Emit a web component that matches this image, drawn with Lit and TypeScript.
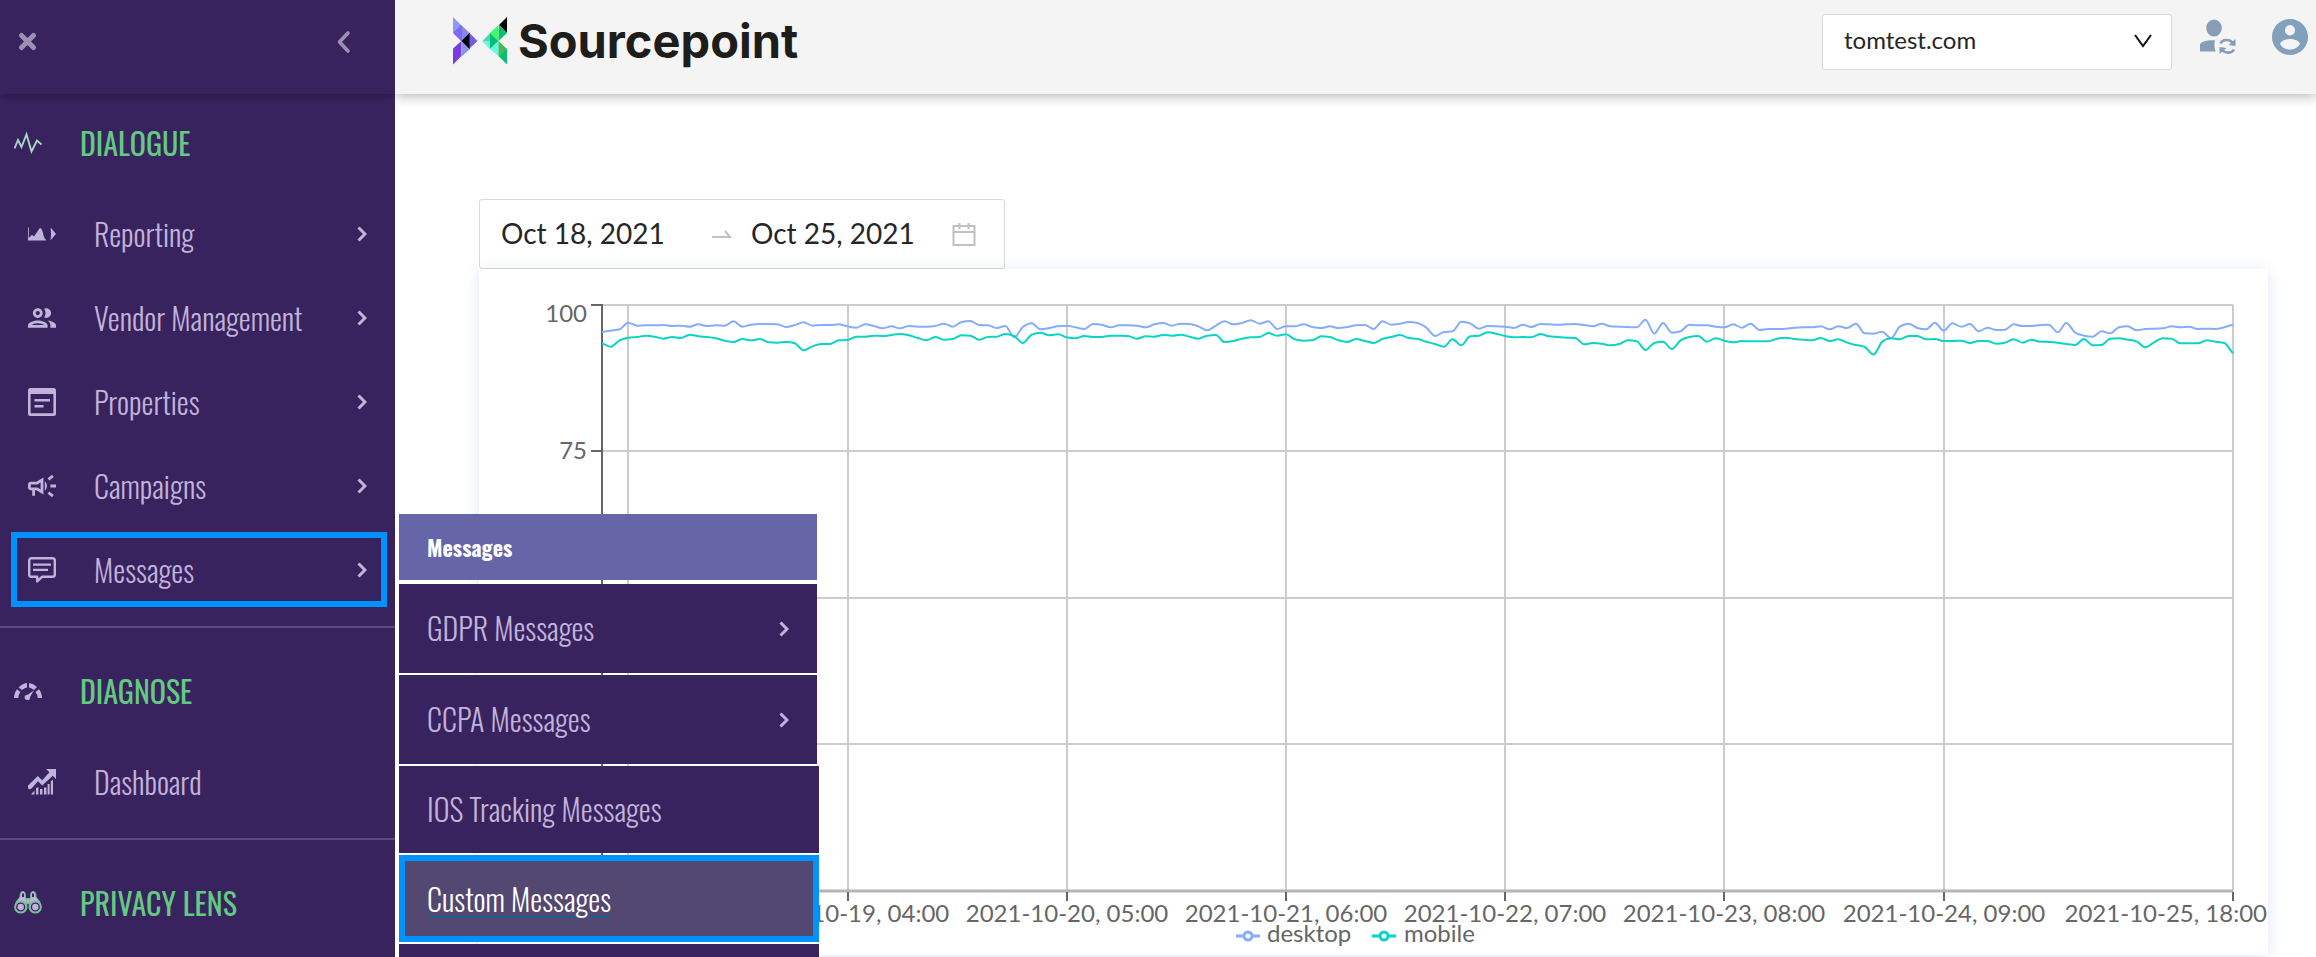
import { LitElement, html, css, svg } from "lit";
import { customElement } from "lit/decorators.js";

const reportingIcon = svg`<path d="M0 7.500h.8v10.500l3.200-3.200 2 1.800 6-8.800c1.500 1 2.400 2.600 3 5.200.6 3 1 5 2.800 6.500v1H0zM22.500 8c1 .3 1.600 1.200 2.200 2.100l3.300 3.900-3.300 3.700c-.6 1-1.200 1.800-2.200 2.200.7-4 .7-8 0-11.900z"/>`;
const vendorIcon = svg`<g transform="scale(1.4) translate(-2 -2)"><path d="M9 13.750c-2.340 0-7 1.170-7 3.500V19h14v-1.750c0-2.330-4.660-3.500-7-3.500zM4.340 17c.84-.58 2.870-1.250 4.660-1.250s3.820.67 4.660 1.250H4.340zM9 12c1.930 0 3.500-1.570 3.500-3.500S10.930 5 9 5 5.500 6.570 5.500 8.500 7.070 12 9 12zm0-5c.83 0 1.500.67 1.500 1.500S9.830 10 9 10s-1.500-.67-1.500-1.500S8.170 7 9 7zm7.040 6.810c1.160.84 1.960 1.960 1.960 3.440V19h4v-1.750c0-2.020-3.500-3.170-5.960-3.440zM15 12c1.930 0 3.500-1.570 3.500-3.500S16.930 5 15 5c-.54 0-1.040.13-1.500.35.63.89 1 1.980 1 3.150s-.37 2.260-1 3.150c.46.22.96.35 1.500.35z"/></g>`;
const propertiesIcon = svg`<path fill-rule="evenodd" d="M2.500 0h23A2.500 2.500 0 0 1 28 2.500v23a2.500 2.500 0 0 1-2.500 2.500h-23A2.500 2.500 0 0 1 0 25.500v-23A2.500 2.500 0 0 1 2.500 0zM2.600 6v19.300h22.800V6z"/><path d="M6.500 11h15.500v2.600H6.500zM6.500 17h9v2.600h-9z"/>`;
const campaignsIcon = svg`<g transform="scale(1.4) translate(-2 -2)"><path d="M18 11v2h4v-2zM16 17.610l3.200 2.390 1.200-1.600-3.200-2.400zM20.400 5.600L19.200 4 16 6.400 17.200 8zM4 9c-1.100 0-2 .9-2 2v2c0 1.100.9 2 2 2h1v4h2v-4h1l5 3V6L8 9H4zm5.030 1.710L11 9.530v4.940l-1.970-1.180-.48-.29H4v-2h4.550zM15.500 12c0-1.330-.58-2.530-1.500-3.350v6.690c.92-.81 1.500-2.010 1.500-3.340z"/></g>`;
const messagesIcon = svg`<path fill="none" stroke="currentColor" stroke-width="2.400" stroke-linejoin="round" d="M3.500 2.200h21a2.300 2.300 0 0 1 2.300 2.300v14a2.300 2.300 0 0 1-2.300 2.300H14l-4.800 4.600v-4.600H3.500a2.300 2.300 0 0 1-2.300-2.300v-14a2.300 2.300 0 0 1 2.300-2.300z"/><path d="M5 7.500h18v2.300H5zM5 12.800h15v2.300H5z"/>`;
const dashboardIcon = svg`<path d="M18 1h10v10l-3.200-3.200-10.600 9.700-4.200-4.200-6.500 7.200a2.200 2.200 0 0 1-3.200-3.200L9.800 8l4.400 4.300 7.200-8z"/><path d="M3 26.500l3.400-4v4zM8 20l2.400-.8v7.300H8zM12 21h2.400v5.500H12zM16 19.500h2.400v7H16zM19.600 16h2v10.500h-2zM22.800 13.500l2.200-2v15h-2.200z"/>`;
const dialogueIcon = svg`<path fill="none" stroke="#a9d8c4" stroke-width="1.900" d="M.5 19.500l3.500-8.500 3.500 7L12.500 5.500l5 17L23 11.500l4.500 4"/>`;
const diagnoseIcon = svg`<path d="M0 21c0-3.200 1-6.300 3-8.800l3.400 2.900A9.500 9.500 0 0 0 4.300 21zM4.600 10.500A14 14 0 0 1 13 6v4.500a9.500 9.500 0 0 0-5 2.600zM15 6a14 14 0 0 1 8 3.900l-3 3.200a9.500 9.500 0 0 0-5-2.600zM25 12.200c2 2.500 3 5.600 3 8.800h-4.300a9.500 9.500 0 0 0-2.200-5.900zM20 13.300l-4 6.600a2.700 2.700 0 1 1-2.300-2.200z"/>`;
const privacyIcon = svg`<g stroke="#6cc58d"><path stroke-width=".9" d="M6 8c0-4.500 1.200-5.500 3-5.500S11.500 4 11.500 8l1.300 4v8h-11L2 13zM16.500 8C16.500 4 17.200 2.500 19 2.500S22 3.500 22 8l4 5 .2 7h-11v-8zM12.500 9.500h3v5h-3z"/><circle cx="6.700" cy="18" r="5.800" stroke-width="1.600"/><circle cx="21.300" cy="18" r="5.800" stroke-width="1.600"/><circle cx="6.700" cy="18" r="3.900" stroke="#38235f" stroke-width="1.400"/><circle cx="21.300" cy="18" r="3.900" stroke="#38235f" stroke-width="1.400"/></g><path fill="#38235f" d="M8 4.500h2V8H8zM18 4.500h2V8h-2z"/>`;

const icon = (shape: unknown) =>
  html`<svg class="icon" viewBox="0 0 28 28" aria-hidden="true">${shape}</svg>`;
const chevron = html`<svg class="chevron" viewBox="0 0 10 16" aria-hidden="true">
  <path d="M1.500 1.500 8 8l-6.500 6.500" /></svg>`;

interface Entry { label: string; icon: unknown; submenu?: boolean; open?: boolean; }
interface Group { title: string; icon: unknown; items: Entry[]; }

const groups: Group[] = [
  {
    title: "DIALOGUE",
    icon: dialogueIcon,
    items: [
      { label: "Reporting", icon: reportingIcon, submenu: true },
      { label: "Vendor Management", icon: vendorIcon, submenu: true },
      { label: "Properties", icon: propertiesIcon, submenu: true },
      { label: "Campaigns", icon: campaignsIcon, submenu: true },
      { label: "Messages", icon: messagesIcon, submenu: true, open: true },
    ],
  },
  { title: "DIAGNOSE", icon: diagnoseIcon, items: [{ label: "Dashboard", icon: dashboardIcon }] },
  { title: "PRIVACY LENS", icon: privacyIcon, items: [] },
];

const navFont = css`Oswald, "Roboto Condensed", "Liberation Sans Narrow", "Open Sans Condensed", sans-serif`;

@customElement("side-nav")
export class SideNav extends LitElement {
  static styles = css`
    :host { display: block; position: relative; z-index: 2; background: #38235f; color: #c2b3da; font-family: ${navFont}; font-size: 30px; font-weight: 300; }
    ul { list-style: none; margin: 0; padding: 0; }
    a { color: inherit; text-decoration: none; }
    .bar { height: 94px; box-sizing: border-box; padding: 0 42px 10px 16px; display: flex; align-items: center; justify-content: space-between; box-shadow: 0 2px 8px rgba(0, 0, 0, 0.3); clip-path: inset(0 0 -12px 0); }
    .bar button { border: 0; padding: 0; background: none; color: #9d90b5; display: flex; }
    .bar svg { width: 24px; height: 24px; fill: none; stroke: currentColor; stroke-linecap: round; stroke-linejoin: round; }
    .group { padding: 14px 0; border-bottom: 2px solid #5f4a80; }
    .group:first-child { padding-top: 0; }
    h2 { height: 98px; margin: 0; padding-left: 14px; display: flex; align-items: center; gap: 38px; color: #64c981; font-size: 30px; font-weight: 400; }
    h2 .icon { color: #c2b3da; }
    .icon { width: 28px; height: 28px; flex: none; fill: currentColor; }
    .row { position: relative; }
    .link { height: 84px; padding: 0 28px; display: flex; align-items: center; gap: 38px; }
    .label { padding-bottom: 2px; white-space: nowrap; }
    .link .label { flex: 1; }
    .chevron { width: 10px; height: 16px; flex: none; fill: none; stroke: currentColor; stroke-width: 3; }
    .open::after { content: ""; position: absolute; inset: 4px 8px 5px 11px; border: 6px solid #0093ff; pointer-events: none; }
    .flyout { position: absolute; z-index: 3; left: calc(100% + 4px); top: -14px; width: 420px; display: flex; flex-direction: column; gap: 2px; }
    .flyout h3 { height: 66px; margin: 0 2px 2px 0; padding-left: 28px; display: flex; align-items: center; background: #6565a8; color: #fff; font-size: 22px; font-weight: 700; }
    .flyout a { height: 87px; padding: 0 28px; display: flex; align-items: center; justify-content: space-between; background: #38235f; }
    .flyout .parent { height: 89px; margin-right: 2px; }
    .flyout .current { box-sizing: border-box; padding: 0 22px; border: 6px solid #0093ff; background: #534871; color: #fff; text-decoration: underline #1f5b8f 2px; text-underline-offset: 4px; }
  `;

  render() {
    return html`
      <div class="bar">
        <button aria-label="Close menu"><svg viewBox="0 0 24 24" stroke-width="5"><path d="M5.500 5.500l12 12M17.500 5.500l-12 12" /></svg></button>
        <button aria-label="Collapse menu"><svg viewBox="0 0 24 24" stroke-width="3.600"><path d="M19 3l-8.500 9 8.500 9" /></svg></button>
      </div>
      <nav aria-label="Main">
        <div>${groups.map((g) => this.group(g))}</div>
      </nav>
    `;
  }

  private group(g: Group) {
    return html`<section class="group">
      <h2>${icon(g.icon)}<span class="label">${g.title}</span></h2>
      <ul>
        ${g.items.map(
          (item) => html`<li class="row ${item.open ? "open" : ""}">
            <a class="link" href="#">${icon(item.icon)}<span class="label">${item.label}</span>${item.submenu ? chevron : ""}</a>
            ${item.open ? this.flyout() : ""}
          </li>`,
        )}
      </ul>
    </section>`;
  }

  private flyout() {
    return html`<div class="flyout">
      <h3>Messages</h3>
      <a class="parent" href="#"><span class="label">GDPR Messages</span>${chevron}</a>
      <a class="parent" href="#"><span class="label">CCPA Messages</span>${chevron}</a>
      <a href="#"><span class="label">IOS Tracking Messages</span></a>
      <a class="current" href="#" aria-current="page">Custom Messages</a>
      <a href="#" aria-label="More messages"></a>
    </div>`;
  }
}

@customElement("top-bar")
export class TopBar extends LitElement {
  static styles = css`
    :host { position: relative; z-index: 1; box-sizing: border-box; height: 94px; padding: 14px 8px 10px 58px; display: flex; align-items: flex-start; justify-content: space-between; background: #f4f4f4; box-shadow: 0 2px 12px rgba(0, 0, 0, 0.3); }
    .brand { display: flex; align-items: center; gap: 11px; height: 54px; color: #1d1d1b; font: 700 47px/54px Inter, "Open Sans", sans-serif; text-decoration: none; }
    .brand svg { width: 54px; height: 48px; }
    .tools { display: flex; align-items: flex-start; }
    .picker { position: relative; display: flex; }
    select { appearance: none; width: 350px; height: 56px; margin: 0; padding: 0 52px 6px 21px; border: 1px solid #d9d9d9; border-radius: 3px; background: #fff; color: #262626; font: 24px Lato, "Open Sans", sans-serif; }
    .picker svg { position: absolute; right: 20px; top: 20px; width: 18px; height: 14px; fill: none; stroke: #111; stroke-width: 2; pointer-events: none; }
    button { margin: 5px 0 0; padding: 0; border: 0; background: none; display: flex; color: #869cb9; }
    button svg { width: 36px; height: 36px; fill: currentColor; }
    .swap { margin-left: 28px; }
    .account { margin-left: 36px; color: #80a0bb; }
  `;

  render() {
    return html`
      <a class="brand" href="#">
        <svg viewBox="0 0 54 48" aria-hidden="true">
          <path fill="#8f96ff" d="M0 0l9 9v7L0 16z" /><path fill="#7f69ee" d="M8 8L0 16l9 9 8-8z" />
          <path fill="#8c93f4" d="M9 9l8 7-8 8 0 0z" opacity=".7" /><path fill="#8c93ea" d="M9 24l8 8-8 7z" />
          <path fill="#745be8" d="M16 15.500l8.500 8.500-8.500 8z" /><path fill="#8c93ea" d="M16 32l-7 7V24z" />
          <path fill="#000" d="M16.500 16v16l-8-8z" /><path fill="#7a3be0" d="M0 31.500L8.500 24v15L0 47.500z" />
          <path fill="#000" d="M54 0v16l-8-8z" /><path fill="#3cff64" d="M45.500 8v16L37 16z" />
          <path fill="#05bf74" d="M46 8l8 8-8.500 8z" /><path fill="#53d2b8" d="M37 16v16l-7.500-8z" />
          <path fill="#05bf74" d="M37 16l8.500 8-8.500 8z" /><path fill="#5dffdc" d="M37 32l8.500-8v15z" />
          <path fill="#5dffdc" d="M29.500 24H37v8z" /><path fill="#4bb856" d="M45.500 24l8.500 8-8.500 7z" />
          <path fill="#05bf74" d="M45.500 39l8.500-7.500v16z" />
        </svg>
        <span>Sourcepoint</span>
      </a>
      <div class="tools">
        <div class="picker">
          <select aria-label="Property"><option>tomtest.com</option></select>
          <svg viewBox="0 0 18 14" aria-hidden="true"><path d="M1 1l8 11 8-11" /></svg>
        </div>
        <button class="swap" aria-label="Switch user">
          <svg viewBox="0 0 36 36"><ellipse cx="14" cy="9" rx="7.800" ry="8.600" /><path d="M0 32.500v-6.500c0-3 6-5 15-4.800-.9 3.800-.8 7.600.6 11.300z" />
            <g fill="none" stroke="currentColor" stroke-width="2.600"><path d="M20.500 24.500c2-4.500 9-4.500 12-.8M34 30.500c-2 4-8.500 4-11.500.8" /></g>
            <path d="M35.500 20v7l-7-1zM19.500 35v-7l7 1z" /></svg>
        </button>
        <button class="account" aria-label="Account">
          <svg viewBox="2 2 20 20"><path d="M12 2C6.480 2 2 6.480 2 12s4.480 10 10 10 10-4.480 10-10S17.520 2 12 2zm0 3.400c1.550 0 2.800 1.250 2.800 2.900s-1.250 2.800-2.800 2.800-2.800-1.150-2.800-2.800S10.450 5.400 12 5.400zm0 13.600c-2.300 0-4.300-1.100-5.500-3 .03-1.900 3.500-2.900 5.500-2.900s5.470 1 5.500 2.900c-1.200 1.900-3.200 3-5.500 3z" /></svg>
        </button>
      </div>
    `;
  }
}

/* Hourly readings, as depth below the top of the plot band in thirds of a chart unit. */
const desktop = [
  96, 92, 88, 68, 77, 76, 76, 75, 78, 77, 80, 73, 78, 76, 77, 64, 80, 74, 72, 72, 73, 81, 75, 67, 77, 75, 75, 73, 79, 83, 73,
  78, 85, 79, 85, 78, 80, 80, 78, 71, 80, 66, 63, 75, 76, 84, 78, 112, 81, 70, 88, 84, 79, 77, 82, 87, 72, 74, 82, 76, 76, 77,
  82, 73, 69, 77, 71, 72, 79, 91, 77, 64, 73, 69, 61, 71, 64, 87, 79, 79, 73, 81, 84, 79, 84, 81, 76, 75, 87, 64, 74, 71, 66,
  69, 83, 108, 96, 94, 65, 70, 86, 78, 79, 80, 84, 74, 81, 72, 73, 74, 73, 72, 75, 79, 71, 79, 80, 81, 82, 59, 101, 69, 98,
  94, 74, 76, 76, 80, 82, 73, 83, 71, 90, 87, 87, 86, 83, 82, 82, 79, 88, 79, 84, 71, 100, 101, 95, 115, 80, 71, 84, 88, 68,
  92, 70, 80, 72, 94, 83, 90, 89, 73, 78, 78, 75, 74, 97, 69, 98, 107, 110, 94, 100, 82, 79, 91, 87, 86, 85, 79, 82, 80, 87,
  86, 87, 82, 74,
];
const mobile = [
  130, 140, 121, 113, 111, 107, 110, 116, 111, 114, 104, 109, 111, 115, 122, 126, 117, 121, 117, 127, 128, 126, 130, 151, 139,
  132, 132, 121, 120, 110, 110, 107, 108, 105, 102, 106, 114, 121, 111, 119, 117, 106, 107, 119, 111, 110, 102, 108, 129, 104,
  98, 106, 103, 112, 115, 108, 111, 111, 107, 107, 108, 116, 109, 110, 105, 107, 104, 110, 116, 107, 105, 126, 123, 116, 112,
  111, 99, 107, 103, 118, 122, 121, 109, 111, 121, 126, 117, 123, 129, 117, 111, 105, 114, 117, 125, 132, 140, 118, 136, 109,
  107, 97, 101, 108, 112, 111, 112, 102, 109, 111, 113, 114, 133, 129, 131, 136, 132, 121, 124, 150, 129, 125, 147, 121, 111,
  108, 125, 115, 122, 127, 123, 124, 124, 124, 116, 113, 117, 119, 121, 114, 123, 118, 128, 135, 141, 164, 125, 115, 118, 108,
  108, 118, 117, 123, 123, 122, 129, 123, 123, 131, 128, 118, 128, 119, 125, 126, 128, 132, 135, 117, 136, 135, 116, 115, 119,
  124, 142, 127, 115, 116, 130, 130, 130, 121, 125, 129, 160,
];

const plot = { left: 123, right: 1754, top: 36, bottom: 622 };
const step = (plot.right - plot.left) / (desktop.length - 1);
const xAt = (index: number) => plot.left + index * step;

/* Monotone cubic through evenly spaced points. */
function curve(values: number[]): string {
  const ys = values.map((v) => 31 + v / 3);
  const last = ys.length - 1;
  const slope = ys.map((_, i) => {
    if (i === 0) return (ys[1] - ys[0]) / step;
    if (i === last) return (ys[last] - ys[last - 1]) / step;
    const a = (ys[i] - ys[i - 1]) / step;
    const b = (ys[i + 1] - ys[i]) / step;
    if (a * b <= 0) return 0;
    return Math.sign(a) * Math.min(2 * Math.abs(a), 2 * Math.abs(b), Math.abs(a + b) / 2);
  });
  let d = `M${xAt(0)} ${ys[0].toFixed(2)}`;
  for (let i = 1; i <= last; i++) {
    const x0 = xAt(i - 1);
    const x1 = xAt(i);
    const h = step / 3;
    d += `C${(x0 + h).toFixed(2)} ${(ys[i - 1] + slope[i - 1] * h).toFixed(2)} ${(x1 - h).toFixed(2)} ${(ys[i] - slope[i] * h).toFixed(2)} ${x1.toFixed(2)} ${ys[i].toFixed(2)}`;
  }
  return d;
}

const ticks = [
  { index: 3, label: "" },
  { index: 28, label: "2021-10-19, 04:00" },
  { index: 53, label: "2021-10-20, 05:00" },
  { index: 78, label: "2021-10-21, 06:00" },
  { index: 103, label: "2021-10-22, 07:00" },
  { index: 128, label: "2021-10-23, 08:00" },
  { index: 153, label: "2021-10-24, 09:00" },
  { index: 186, label: "2021-10-25, 18:00" },
];
const levels = [
  { y: 36, label: "100", baseline: 53 },
  { y: 182, label: "75", baseline: 190 },
  { y: 329, label: "", baseline: 337 },
  { y: 475, label: "", baseline: 483 },
];

@customElement("rate-chart")
export class RateChart extends LitElement {
  static styles = css`
    :host { display: block; background: #fff; box-shadow: 0 2px 14px rgba(100, 130, 190, 0.2); }
    svg { display: block; width: 100%; height: auto; font: 24px Lato, "Open Sans", sans-serif; fill: #666; }
    .grid line { stroke: #ccc; stroke-width: 2; }
    .axis line { stroke: #666; stroke-width: 2; }
    .baseline { stroke: #b5b5b5; stroke-width: 3; }
    .series { fill: none; stroke-width: 2; }
    .desktop { stroke: #84acff; }
    .mobile { stroke: #0ad5c4; }
    .middle { text-anchor: middle; }
    .end { text-anchor: end; }
    .key { fill: #fff; stroke-width: 3; }
  `;

  render() {
    return html`<svg viewBox="0 0 1789 686" role="img" aria-label="Desktop and mobile rate by hour">
      <g class="grid">
        ${levels.map((l) => svg`<line x1=${plot.left} x2=${plot.right} y1=${l.y} y2=${l.y} />`)}
        ${ticks.map((t) => {
          const x = Math.round(xAt(t.index));
          return svg`<line x1=${x} x2=${x} y1=${plot.top} y2=${plot.bottom} />`;
        })}
      </g>
      <line class="baseline" x1=${plot.left} x2=${plot.right} y1=${plot.bottom} y2=${plot.bottom} />
      <g class="axis">
        <line x1=${plot.left} x2=${plot.left} y1="35" y2=${plot.bottom} />
        ${levels.map((l) => svg`<line x1=${plot.left - 11} x2=${plot.left} y1=${l.y} y2=${l.y} />`)}
        ${ticks.map((t) => {
          const x = Math.round(xAt(t.index));
          return svg`<line x1=${x} x2=${x} y1=${plot.bottom + 1} y2=${plot.bottom + 10} />`;
        })}
      </g>
      <path class="series desktop" d=${curve(desktop)} />
      <path class="series mobile" d=${curve(mobile)} />
      ${levels.filter((l) => l.label).map((l) => svg`<text class="end" x=${plot.left - 15} y=${l.baseline}>${l.label}</text>`)}
      ${ticks
        .filter((t) => t.label)
        .map((t) => t.index === 186
          ? svg`<text class="end" x="1788" y="653">${t.label}</text>`
          : svg`<text class="middle" x=${Math.round(xAt(t.index))} y="653">${t.label}</text>`)}
      <g class="desktop"><path d="M757 667h24" stroke-width="3" /><circle class="key" cx="769" cy="667" r="4" /></g>
      <text x="788" y="673">desktop</text>
      <g class="mobile"><path d="M893 667h24" stroke-width="3" /><circle class="key" cx="905" cy="667" r="4" /></g>
      <text x="925" y="673">mobile</text>
    </svg>`;
  }
}

@customElement("app-root")
export class AppRoot extends LitElement {
  static styles = css`
    :host { display: grid; grid-template-columns: 395px minmax(0, 1fr); height: 100vh; overflow: hidden; background: #fff; }
    main { padding: 105px 48px 0 84px; }
    .range { box-sizing: border-box; width: 526px; height: 70px; padding: 0 28px 0 21px; display: flex; align-items: center; gap: 19px; border: 1px solid #d9d9d9; border-radius: 3px; background: #fff; }
    .range input { width: 172px; padding: 0 0 2px; border: 0; background: none; color: #262626; font: 28px Lato, "Open Sans", sans-serif; }
    .range .until { flex: 1; min-width: 0; }
    .range svg { flex: none; fill: none; stroke: #c0c0c0; stroke-width: 2; }
    .arrow { width: 20px; height: 20px; margin-left: 20px; }
    .calendar { width: 24px; height: 24px; }
  `;

  render() {
    return html`
      <side-nav></side-nav>
      <div>
        <top-bar></top-bar>
        <main>
          <div class="range">
            <input type="text" aria-label="Start date" value="Oct 18, 2021" />
            <svg class="arrow" viewBox="0 0 20 20" aria-hidden="true"><path d="M0 13h18L13 7" /></svg>
            <input class="until" type="text" aria-label="End date" value="Oct 25, 2021" />
            <svg class="calendar" viewBox="0 0 24 24" aria-hidden="true"><path d="M1.500 4h21v19h-21zM1.500 10h21M7.500 1v6M16.500 1v6" /></svg>
          </div>
          <rate-chart></rate-chart>
        </main>
      </div>
    `;
  }
}
